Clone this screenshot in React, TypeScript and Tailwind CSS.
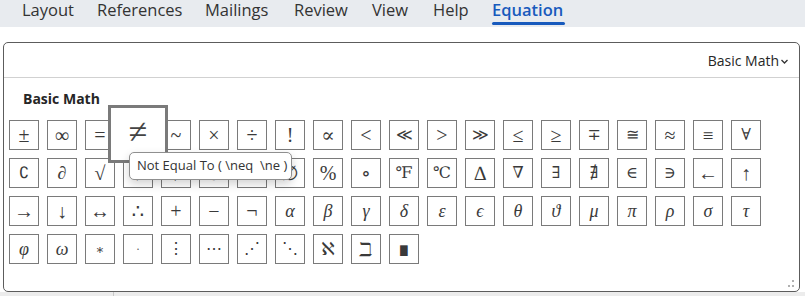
import React from 'react';

const TABS = [
  { label: 'Layout', w: 'w-[75px]' },
  { label: 'References', w: 'w-[108px]' },
  { label: 'Mailings', w: 'w-[89px]' },
  { label: 'Review', w: 'w-[78px]' },
  { label: 'View', w: 'w-[61px]' },
  { label: 'Help', w: 'w-[59px]' },
];

type Sym = { s: string; i?: boolean; c?: string };

// symbols that fall back to DejaVu render heavier, so they get a smaller size
const SM = 'text-[16px] font-light';

const SYMBOLS: Sym[] = [
  { s: '±' }, { s: '∞' }, { s: '=' }, { s: '≠' }, { s: '~' }, { s: '×' }, { s: '÷' }, { s: '!' }, { s: '∝' }, { s: '<' },
  { s: '≪', c: SM }, { s: '>' }, { s: '≫', c: SM }, { s: '≤' }, { s: '≥' }, { s: '∓', c: SM }, { s: '≅', c: SM }, { s: '≈' }, { s: '≡', c: 'text-[19px]' }, { s: '∀', c: SM },
  { s: '∁', c: SM }, { s: '∂', i: true }, { s: '√' }, { s: '∛' }, { s: '∜' }, { s: '∪' }, { s: '∩' }, { s: '∅' }, { s: '%' }, { s: '∘' },
  { s: '℉', c: 'text-[16px]' }, { s: '℃', c: 'text-[16px]' }, { s: '∆' }, { s: '∇', c: SM }, { s: '∃', c: SM }, { s: '∄', c: SM }, { s: '∈', c: SM }, { s: '∋', c: SM }, { s: '←' }, { s: '↑' },
  { s: '→' }, { s: '↓' }, { s: '↔' }, { s: '∴' }, { s: '+' }, { s: '−' }, { s: '¬' }, { s: 'α', i: true }, { s: 'β', i: true }, { s: 'γ', i: true },
  { s: 'δ', i: true }, { s: 'ε', i: true }, { s: 'ϵ', i: true }, { s: 'θ', i: true }, { s: 'ϑ', i: true }, { s: 'μ', i: true }, { s: 'π', i: true }, { s: 'ρ', i: true }, { s: 'σ', i: true }, { s: 'τ', i: true },
  { s: 'φ', i: true }, { s: 'ω', i: true }, { s: '∗', c: 'text-[13px]' }, { s: '∙', c: 'text-[12px]' }, { s: '⋮', c: SM }, { s: '⋯', c: SM }, { s: '⋰', c: SM }, { s: '⋱', c: SM }, { s: 'ℵ', c: 'text-[18px]' }, { s: 'ℶ', c: 'text-[19px]' },
  { s: '∎', c: 'text-[22px]' },
];

const symFont = { fontFamily: '"Liberation Serif", "DejaVu Serif", "DejaVu Sans", serif' };
const uiFont = { fontFamily: '"Open Sans", "Noto Sans", sans-serif' };

export default function App() {
  return (
    <div className="w-[805px] h-[296px] bg-white overflow-hidden flex flex-col" style={uiFont}>
      {/* Ribbon tabs */}
      <div className="h-[27px] bg-[#e8ebef] flex items-start pl-[22px] text-[16.5px] leading-[20px] text-[#333] shrink-0">
        {TABS.map((t) => (
          <div key={t.label} className={t.w}>{t.label}</div>
        ))}
        <div className="relative font-semibold text-[#185abd]">
          Equation
          <div className="absolute left-0 right-[-2px] top-[22px] h-[3px] rounded-full bg-[#185abd]" />
        </div>
      </div>

      <div className="h-[15px] shrink-0" />

      {/* Symbol gallery panel */}
      <div className="ml-[3px] w-[797px] h-[250px] border border-[#5c5c5c] rounded-[5px] bg-white flex flex-col relative shrink-0">
        <div className="h-[35px] border-b border-[#d1d1d1] flex items-center justify-end pr-[10px] text-[14px] text-[#262626] shrink-0">
          <span>Basic Math</span>
          <svg width="9" height="9" viewBox="0 0 9 9" className="ml-[1px] mt-[2px]">
            <path d="M1.5 3 L4.5 6 L7.5 3" fill="none" stroke="#333" strokeWidth="1.3" />
          </svg>
        </div>

        <div className="pl-[19px] pt-[11px] text-[14px] font-bold text-[#262626] leading-[20px]">Basic Math</div>

        <div className="pl-[5px] pt-[11px] grid grid-cols-[repeat(20,30px)] gap-[8px]">
          {SYMBOLS.map((sym, idx) => (
            <div
              key={idx}
              className="relative w-[30px] h-[30px] border-[1.5px] border-[#7a7a7a] flex items-center justify-center text-[#3a3a3a]"
            >
              <span
                className={`${sym.c ?? (sym.i ? 'text-[18px]' : 'text-[20px]')} leading-none ${sym.i ? 'italic' : ''}`}
                style={symFont}
              >
                {sym.s}
              </span>

              {idx === 3 && (
                <>
                  <div className="absolute -left-[16px] -top-[16px] w-[60px] h-[58px] border-[3px] border-[#7a7a7a] bg-white z-10 flex items-center justify-center">
                    <span className="text-[34px] leading-none text-[#444] -mt-[4px]" style={symFont}>≠</span>
                  </div>
                  <div className="absolute left-[5px] top-[31px] w-[163px] h-[28px] rounded-[5px] border border-[#8f8f8f] bg-white z-20 shadow-[0_4px_10px_rgba(0,0,0,0.18)] flex items-center pl-[7px] text-[13px] text-[#333] whitespace-pre">
                    {'Not Equal To ( \\neq  \\ne )'}
                  </div>
                </>
              )}
            </div>
          ))}
        </div>

        {/* resize grip */}
        <svg width="8" height="8" viewBox="0 0 8 8" className="absolute right-[4px] bottom-[3px]">
          <rect x="5" y="0" width="2" height="2" fill="#b0b0b0" />
          <rect x="1" y="5" width="2" height="2" fill="#b0b0b0" />
          <rect x="5" y="5" width="2" height="2" fill="#b0b0b0" />
        </svg>
      </div>

      <div className="flex-1 bg-[#ececec] relative">
        <div className="absolute left-[113px] top-0 bottom-0 w-px bg-[#c8c8c8]" />
      </div>
    </div>
  );
}
